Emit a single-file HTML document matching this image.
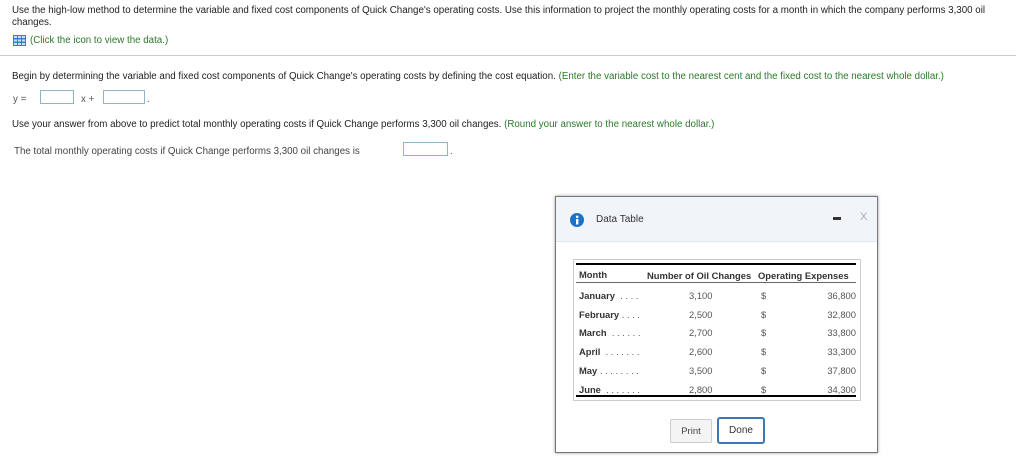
<!DOCTYPE html><html><head><style>
body{margin:0;width:1024px;height:458px;background:#fff;font-family:"Liberation Sans",Arial,sans-serif;font-size:9.75px;color:#222;position:relative;overflow:hidden}
.a{position:absolute;white-space:nowrap}
.g{color:#2a7a2a}
.in{position:absolute;border:1px solid #8fb3c9;background:#fff;height:12px}
.r{position:absolute;font-size:9.4px}
.b{font-weight:bold;color:#333}
.e{position:absolute;left:230px;width:70px;text-align:right;font-size:9.4px;color:#555}
.btn{position:absolute;display:flex;align-items:center;justify-content:center}
</style></head><body>
<div class="a" style="left:12px;top:5px">Use the high-low method to determine the variable and fixed cost components of Quick Change's operating costs. Use this information to project the monthly operating costs for a month in which the company performs 3,300 oil</div>
<div class="a" style="left:12px;top:17px">changes.</div>
<svg class="a" style="left:13px;top:35px" width="13" height="11"><rect x="0" y="0" width="13" height="11" fill="#3a7bd5"/><g fill="#cfe0f7"><rect x="1" y="1" width="3" height="2"/><rect x="5" y="1" width="3" height="2"/><rect x="9" y="1" width="3" height="2"/><rect x="1" y="4.5" width="3" height="2"/><rect x="5" y="4.5" width="3" height="2"/><rect x="9" y="4.5" width="3" height="2"/><rect x="1" y="8" width="3" height="2"/><rect x="5" y="8" width="3" height="2"/><rect x="9" y="8" width="3" height="2"/></g></svg>
<div class="a g" style="left:30px;top:35px">(Click the icon to view the data.)</div>
<div class="a" style="left:0;top:55px;width:1016px;border-top:1px solid #ccc"></div>
<div class="a" style="left:12px;top:71px">Begin by determining the variable and fixed cost components of Quick Change's operating costs by defining the cost equation. <span class="g">(Enter the variable cost to the nearest cent and the fixed cost to the nearest whole dollar.)</span></div>
<div class="a" style="left:13px;top:94px;color:#555">y =</div>
<div class="in" style="left:40px;top:90px;width:32px"></div>
<div class="a" style="left:81px;top:94px;color:#555">x +</div>
<div class="in" style="left:103px;top:90px;width:40px"></div>
<div class="a" style="left:147px;top:94px;color:#555">.</div>
<div class="a" style="left:12px;top:119px">Use your answer from above to predict total monthly operating costs if Quick Change performs 3,300 oil changes. <span class="g">(Round your answer to the nearest whole dollar.)</span></div>
<div class="a" style="left:14px;top:146px;color:#444">The total monthly operating costs if Quick Change performs 3,300 oil changes is</div>
<div class="in" style="left:403px;top:142px;width:43px"></div>
<div class="a" style="left:450px;top:146px;color:#555">.</div>

<div class="a" style="left:555px;top:196px;width:321px;height:255px;border:1px solid #777;box-shadow:0 0 3px #999;background:#fff">
 <div style="position:absolute;left:0;top:0;width:321px;height:44px;background:#f1f5fa;border-bottom:1px solid #e0e6ee"></div>
 <svg style="position:absolute;left:14px;top:16px" width="14" height="14"><circle cx="7" cy="7" r="7" fill="#1a73c9"/><rect x="6" y="6" width="2.4" height="5.5" fill="#fff"/><circle cx="7.2" cy="3.8" r="1.3" fill="#fff"/></svg>
 <div class="a" style="left:40px;top:17px;font-size:10px;color:#333">Data Table</div>
 <div class="a" style="left:277px;top:20px;width:8px;height:3px;background:#333"></div>
 <div class="a" style="left:304px;top:14px;color:#aab;font-size:11px">X</div>
 <div class="a" style="left:17px;top:62px;width:286px;height:140px;border:1px solid #ccc"></div>
 <div class="a" style="left:20px;top:66px;width:280px;border-top:2px solid #000"></div>
 <div class="a" style="left:20px;top:85px;width:280px;border-top:1px solid #666"></div>
 <div class="a" style="left:20px;top:198px;width:280px;border-top:2px solid #000"></div>
 <div class="r b" style="left:23px;top:72px">Month</div>
 <div class="r b" style="left:91px;top:73px">Number of Oil Changes</div>
 <div class="r b" style="left:202px;top:73px">Operating Expenses</div>
 <div class="r b" style="left:23px;top:93px">January <span style="color:#555;font-weight:normal">&nbsp;. . . .</span></div>
 <div class="r b" style="left:23px;top:112px">February <span style="color:#555;font-weight:normal">. . . .</span></div>
 <div class="r b" style="left:23px;top:130px">March <span style="color:#555;font-weight:normal">&nbsp;. . . . . .</span></div>
 <div class="r b" style="left:23px;top:149px">April <span style="color:#555;font-weight:normal">&nbsp;. . . . . . .</span></div>
 <div class="r b" style="left:23px;top:168px">May <span style="color:#555;font-weight:normal">. . . . . . . .</span></div>
 <div class="r b" style="left:23px;top:187px">June <span style="color:#555;font-weight:normal">&nbsp;. . . . . . .</span></div>
 <div class="r" style="left:133px;top:93px;color:#555">3,100</div><div class="r" style="left:205px;top:93px;color:#555">$</div><div class="e" style="top:93px">36,800</div>
 <div class="r" style="left:133px;top:112px;color:#555">2,500</div><div class="r" style="left:205px;top:112px;color:#555">$</div><div class="e" style="top:112px">32,800</div>
 <div class="r" style="left:133px;top:130px;color:#555">2,700</div><div class="r" style="left:205px;top:130px;color:#555">$</div><div class="e" style="top:130px">33,800</div>
 <div class="r" style="left:133px;top:149px;color:#555">2,600</div><div class="r" style="left:205px;top:149px;color:#555">$</div><div class="e" style="top:149px">33,300</div>
 <div class="r" style="left:133px;top:168px;color:#555">3,500</div><div class="r" style="left:205px;top:168px;color:#555">$</div><div class="e" style="top:168px">37,800</div>
 <div class="r" style="left:133px;top:187px;color:#555">2,800</div><div class="r" style="left:205px;top:187px;color:#555">$</div><div class="e" style="top:187px">34,300</div>
 <div class="btn" style="left:114px;top:222px;width:40px;height:22px;border:1px solid #ccc;background:#f4f4f4;border-radius:2px;font-size:9.5px;color:#444">Print</div>
 <div class="btn" style="left:161px;top:220px;width:44px;height:23px;border:2px solid #3a78b5;border-radius:3px;background:#fff;font-size:10px;color:#333">Done</div>
</div>
</body></html>
